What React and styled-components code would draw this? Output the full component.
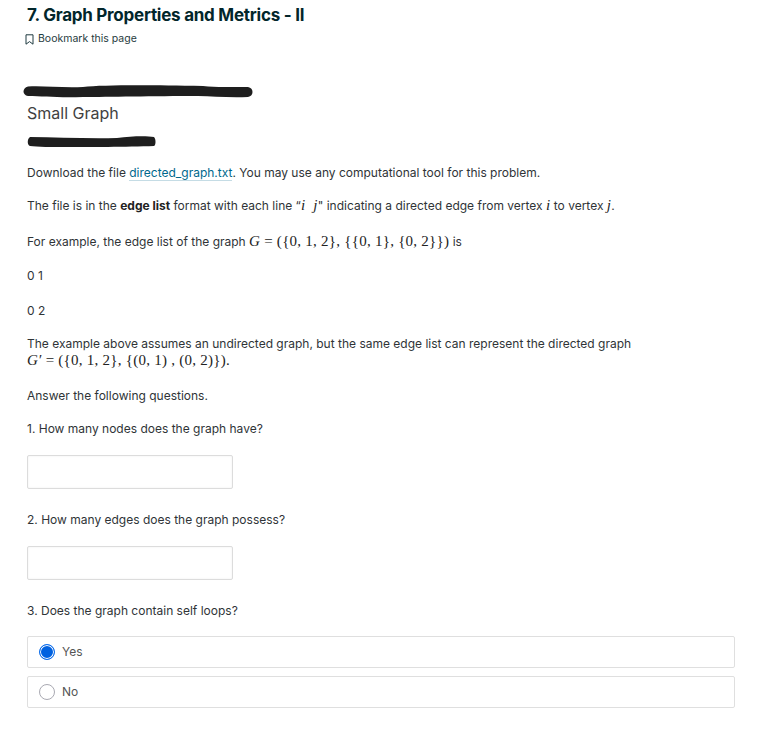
import styled, { createGlobalStyle } from 'styled-components'

const GlobalStyle = createGlobalStyle`
  html, body {
    margin: 0;
    padding: 0;
    background: #ffffff;
  }
`

function BookmarkIcon() {
  return (
    <svg width="9" height="11" viewBox="0 0 9 11" fill="none" stroke="#1f3b40" strokeWidth="1">
      <path d="M1 0.8h7v9.4L4.5 7.6L1 10.2z" strokeLinejoin="round" />
    </svg>
  )
}

function Scribble({ width, height, d }) {
  return (
    <svg width={width} height={height} viewBox={`0 0 ${width} ${height}`}>
      <path d={d} fill="#1e1e1e" />
    </svg>
  )
}

function Radio({ checked, label }) {
  return (
    <Option>
      <RadioMark $checked={checked} />
      <OptionLabel>{label}</OptionLabel>
    </Option>
  )
}

export default function App() {
  return (
    <Page>
      <GlobalStyle />
      <Title>7. Graph Properties and Metrics - II</Title>
      <BookmarkRow>
        <BookmarkIcon />
        <span>Bookmark this page</span>
      </BookmarkRow>
      <TopScribble>
        <Scribble
          width={230}
          height={13}
          d="M5 1.5C20 0.5 38 3 60 2C80 0 120 0 180 1C195 3 215 1.5 225 2C231 3 231 11 225 12C205 13 190 11 175 11C130 11 85 12 60 12C35 13 20 11 5 11C-1 10 -1 3 5 1.5Z"
        />
      </TopScribble>
      <Subtitle>Small Graph</Subtitle>
      <LowerScribble>
        <Scribble
          width={129}
          height={12}
          d="M3 1C30 1 60 3 90 2C105 0 120 0 127 1C129 3 129 9 127 10C100 11 60 11 40 11C25 11 10 11 3 10C0 9 0 3 3 1Z"
        />
      </LowerScribble>
      <Text $top={16}>
        Download the file <FileLink href="#">directed_graph.txt</FileLink>. You may use any computational tool for this problem.
      </Text>
      <Text $top={16}>
        The file is in the <strong>edge list</strong> format with each line “<Math><i>i&nbsp;&nbsp;j</i></Math>" indicating a directed edge from vertex <Math><i>i</i></Math> to vertex <Math><i>j</i></Math>.
      </Text>
      <Text $top={19}>
        For example, the edge list of the graph <Math><i>G</i> = ({'{'}0, 1, 2{'}'}, {'{'}{'{'}0, 1{'}'}, {'{'}0, 2{'}'}{'}'})</Math> is
      </Text>
      <Text $top={17}>0 1</Text>
      <Text $top={18}>0 2</Text>
      <Text $top={16}>
        The example above assumes an undirected graph, but the same edge list can represent the directed graph
        <br />
        <Math><i>G′</i> = ({'{'}0, 1, 2{'}'}, {'{'}(0, 1) , (0, 2){'}'}).</Math>
      </Text>
      <Text $top={18}>Answer the following questions.</Text>
      <Text $top={16}>1. How many nodes does the graph have?</Text>
      <AnswerInput aria-label="nodes" />
      <Text $top={22}>2. How many edges does the graph possess?</Text>
      <AnswerInput aria-label="edges" />
      <Text $top={22}>3. Does the graph contain self loops?</Text>
      <Options>
        <Radio checked label="Yes" />
        <Radio label="No" />
      </Options>
    </Page>
  )
}

const Page = styled.main`
  width: 708px;
  height: 733px;
  padding: 5px 0 0 27px;
  overflow: hidden;
  font-family: Inter, "Liberation Sans", sans-serif;
  color: #2f3437;
`

const Title = styled.h1`
  margin: 0;
  color: #02262b;
  font-size: 17px;
  font-weight: 700;
  line-height: 20px;
  letter-spacing: -0.25px;
`

const BookmarkRow = styled.div`
  display: flex;
  align-items: center;
  gap: 4px;
  margin: 7px 0 0 -2px;
  color: #1f3b40;
  font-size: 10.5px;
  line-height: 14px;
`

const TopScribble = styled.div`
  display: flex;
  height: 13px;
  margin: 39px 0 0 -4px;
`

const Subtitle = styled.h2`
  margin: 5px 0 0;
  color: #414141;
  font-size: 16px;
  font-weight: 400;
  line-height: 20px;
`

const LowerScribble = styled.div`
  display: flex;
  height: 12px;
  margin-top: 13px;
`

const Text = styled.p`
  margin: ${(props) => props.$top}px 0 0;
  font-size: 12px;
  line-height: 17px;

  strong {
    font-weight: 700;
    color: #222222;
  }
`

const FileLink = styled.a`
  color: #00688d;
  text-decoration: none;
  border-bottom: 1px solid #c5dce5;
`

const Math = styled.span`
  font-family: "Liberation Serif", serif;
  font-size: 15px;
  line-height: 1;
  letter-spacing: 0.25px;
  color: #222222;
`

const AnswerInput = styled.input`
  display: block;
  box-sizing: border-box;
  width: 206px;
  height: 34px;
  margin-top: 18px;
  border: 1px solid #dcdcdc;
  border-radius: 2px;
  background: #ffffff;
  box-shadow: inset 0 0 2px rgba(0, 0, 0, 0.08);
`

const Options = styled.div`
  display: grid;
  gap: 8px;
  margin-top: 17px;
`

const Option = styled.label`
  display: flex;
  align-items: center;
  gap: 7px;
  box-sizing: border-box;
  width: 708px;
  height: 32px;
  padding-left: 11px;
  border: 1px solid #dfdfdf;
  border-radius: 2px;
`

const RadioMark = styled.span`
  box-sizing: border-box;
  width: 16px;
  height: 16px;
  margin-top: -1px;
  border-radius: 50%;
  border: 1px solid ${(props) => (props.$checked ? '#0f6fec' : '#a9a9b2')};
  background: ${(props) => (props.$checked ? '#0061e0' : '#ffffff')};
  box-shadow: ${(props) => (props.$checked ? 'inset 0 0 0 1px #ffffff' : 'none')};
`

const OptionLabel = styled.span`
  margin-top: -2px;
  color: #555555;
  font-size: 12px;
`
